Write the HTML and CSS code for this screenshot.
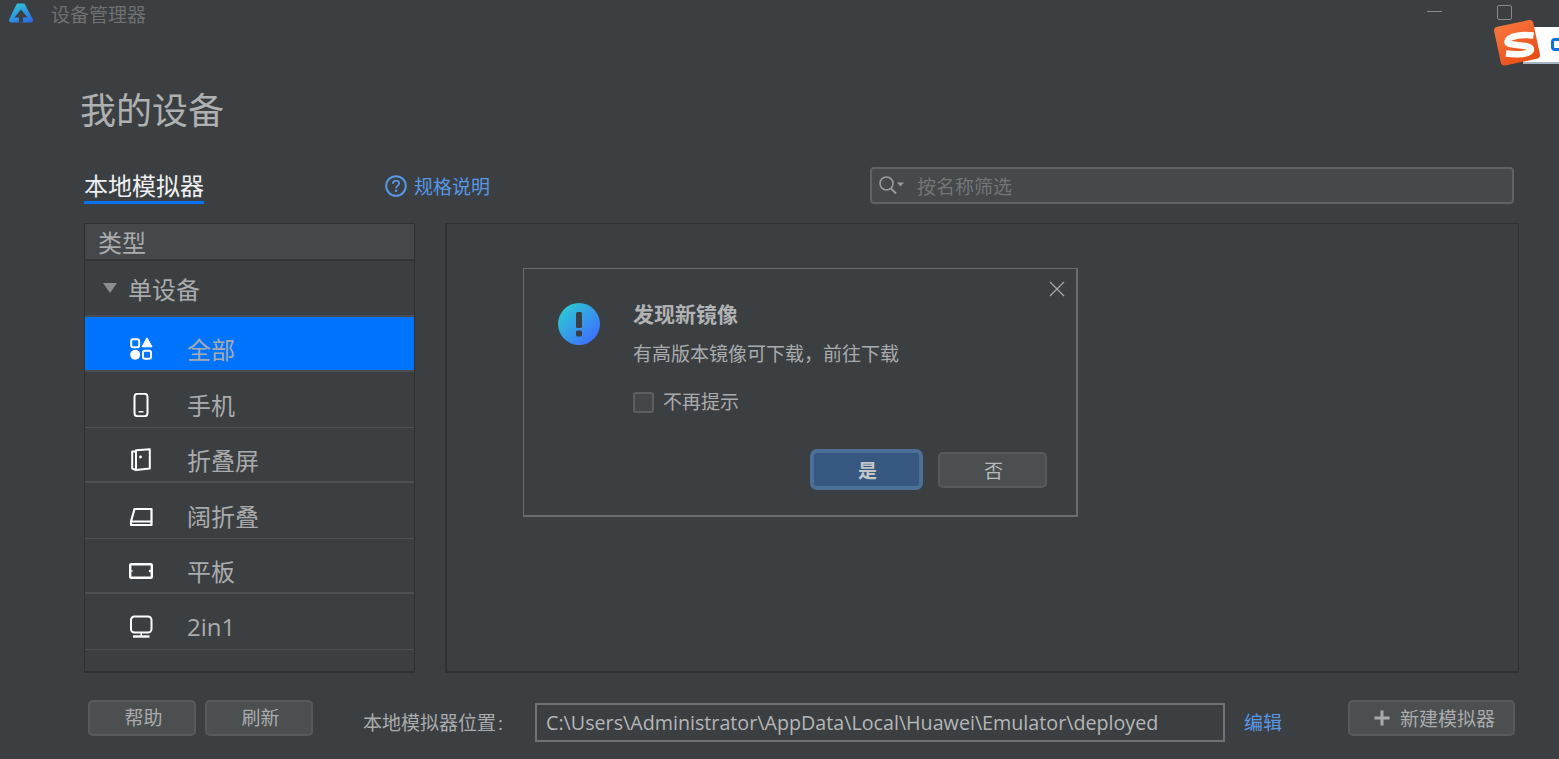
FILE: index.html
```html
<!DOCTYPE html>
<html lang="zh-CN">
<head>
<meta charset="utf-8">
<title>设备管理器</title>
<link rel="stylesheet" href="styles.css">
</head>
<body>
<div class="app">
  <header class="titlebar">
    <svg class="logo" viewBox="0 0 24 20" width="24" height="20">
      <defs>
        <linearGradient id="lg1" x1="0.200" y1="0" x2="0.800" y2="1"><stop offset="0" stop-color="#30c8d8"/><stop offset="1" stop-color="#2d6ce6"/></linearGradient>
      </defs>
      <path d="M8 0.500h7.500l8.200 15.500c.8 1.800-.2 3.500-2 3.500H2.300c-1.800 0-2.800-1.700-2-3.500z" fill="url(#lg1)"/>
      <path d="M12 6.500l6.500 8h-4.500v5h-4v-5H5.500z" fill="#3c3f41"/>
    </svg>
    <span class="app-name">设备管理器</span>
    <span class="win-min"></span>
    <span class="win-max"></span>
  </header>

  <h1 class="page-title">我的设备</h1>

  <div class="toolbar">
    <span class="tab">本地模拟器</span>
    <a class="spec">
      <svg viewBox="0 0 22 22" width="22" height="22">
        <circle cx="11" cy="11" r="9.800" fill="none" stroke="#5797e6" stroke-width="2"/>
        <path d="M7.900 8.700c0-1.900 1.400-3 3.100-3s3.100 1.100 3.100 2.800c0 2.400-3.100 2.400-3.100 4.800" fill="none" stroke="#5797e6" stroke-width="1.800"/>
        <circle cx="11" cy="15.800" r="1.200" fill="#5797e6"/>
      </svg>
      <span>规格说明</span>
    </a>
    <div class="search">
      <svg viewBox="0 0 28 20" width="28" height="20">
        <circle cx="8.500" cy="8.500" r="6.500" fill="none" stroke="#9a9c9e" stroke-width="1.600"/>
        <path d="M13 13.500l5 5" stroke="#9a9c9e" stroke-width="1.800" fill="none"/>
        <path d="M19 7.500h7l-3.500 4z" fill="#9a9c9e"/>
      </svg>
      <span class="placeholder">按名称筛选</span>
    </div>
  </div>

  <div class="content">
    <aside class="side">
      <div class="side-head">类型</div>
      <div class="group"><i class="caret"></i>单设备</div>
      <ul class="list">
        <li class="row active">
          <svg class="ico" viewBox="0 0 24 24" width="24" height="24">
            <rect x="2.200" y="2.200" width="8" height="8" rx="2" fill="none" stroke="#fff" stroke-width="2"/>
            <path d="M18 0.800l5 9h-10z" fill="#fff" stroke="#fff" stroke-linejoin="round"/>
            <circle cx="6.200" cy="17.800" r="5" fill="#fff"/>
            <rect x="14" y="13.800" width="8" height="8" rx="2" fill="none" stroke="#fff" stroke-width="2"/>
          </svg>
          <span>全部</span>
        </li>
        <li class="row">
          <svg class="ico" viewBox="0 0 24 24" width="24" height="24">
            <rect x="5.500" y="0.800" width="13" height="22.400" rx="3" fill="none" stroke="#fff" stroke-width="2"/>
            <path d="M9.500 18.800h5" stroke="#fff" stroke-width="1.400"/>
          </svg>
          <span>手机</span>
        </li>
        <li class="row thick">
          <svg class="ico" viewBox="0 0 24 24" width="24" height="24">
            <path d="M7 2.200l13.800-1v19.200L7 22z" fill="none" stroke="#fff" stroke-width="2" stroke-linejoin="round"/>
            <path d="M7 3.500H3.200v17L7 22" fill="none" stroke="#fff" stroke-width="2" stroke-linejoin="round"/>
            <circle cx="11.500" cy="9" r="1.400" fill="#fff"/>
          </svg>
          <span>折叠屏</span>
        </li>
        <li class="row">
          <svg class="ico" viewBox="0 0 24 24" width="24" height="24">
            <path d="M5.500 5h17v12.500H2z" fill="none" stroke="#fff" stroke-width="2.200" stroke-linejoin="round"/>
            <path d="M2 17.500V21h20.500v-3.500" fill="none" stroke="#fff" stroke-width="2.200" stroke-linejoin="round"/>
          </svg>
          <span>阔折叠</span>
        </li>
        <li class="row thick">
          <svg class="ico" viewBox="0 0 24 24" width="24" height="24">
            <rect x="1.200" y="5.200" width="21.600" height="13.600" rx="1" fill="none" stroke="#fff" stroke-width="2.400"/>
            <circle cx="3" cy="12" r="0.800" fill="#fff"/>
            <circle cx="21" cy="12" r="1.300" fill="#fff"/>
          </svg>
          <span>平板</span>
        </li>
        <li class="row">
          <svg class="ico" viewBox="0 0 24 24" width="24" height="24">
            <rect x="2" y="1.500" width="20.500" height="16" rx="3.500" fill="none" stroke="#fff" stroke-width="2"/>
            <path d="M12.200 18v3" stroke="#fff" stroke-width="1.500"/>
            <path d="M4 21.500h16.500" stroke="#fff" stroke-width="2.400"/>
          </svg>
          <span>2in1</span>
        </li>
      </ul>
    </aside>
    <section class="panel"></section>
  </div>

  <footer class="footer">
    <button class="btn btn-foot">帮助</button>
    <button class="btn btn-foot">刷新</button>
    <span class="loc-label">本地模拟器位置<span class="colon">:</span></span>
    <div class="loc-input">C:\Users\Administrator\AppData\Local\Huawei\Emulator\deployed</div>
    <a class="edit">编辑</a>
    <button class="btn btn-new">
      <svg viewBox="0 0 16 16" width="16" height="16"><path d="M8 0.500v15M0.500 8h15" stroke="#a9abad" stroke-width="3"/></svg>
      <span>新建模拟器</span>
    </button>
  </footer>
</div>

<div class="dialog">
  <svg class="close" viewBox="0 0 16 16" width="16" height="16"><path d="M1 1l14 14M15 1L1 15" stroke="#a4a6a8" stroke-width="1.300" fill="none"/></svg>
  <div class="dlg-top">
    <svg class="dlg-icon" viewBox="0 0 42 42" width="42" height="42">
      <defs><linearGradient id="dg" x1="0.100" y1="0.100" x2="0.900" y2="0.900"><stop offset="0" stop-color="#2bcbd3"/><stop offset="1" stop-color="#3f6cff"/></linearGradient></defs>
      <circle cx="21" cy="21" r="21" fill="url(#dg)"/>
      <rect x="18" y="9" width="6" height="16" rx="1.500" fill="#3c3f41"/>
      <rect x="18" y="27.500" width="6" height="6" rx="1.500" fill="#3c3f41"/>
    </svg>
    <div class="dlg-body">
      <div class="dlg-title">发现新镜像</div>
      <div class="dlg-text">有高版本镜像可下载，前往下载</div>
      <label class="dlg-check"><i class="box"></i><span>不再提示</span></label>
    </div>
  </div>
  <div class="dlg-actions">
    <button class="btn btn-yes">是</button>
    <button class="btn btn-no">否</button>
  </div>
</div>

<div class="ime">
  <div class="ime-bar"><span></span></div>
  <svg class="ime-s" viewBox="0 0 48 48" width="48" height="48">
    <defs><linearGradient id="sg" x1="0.300" y1="0" x2="0.700" y2="1"><stop offset="0" stop-color="#f6743c"/><stop offset="1" stop-color="#e84e17"/></linearGradient></defs>
    <rect x="4" y="4" width="40" height="39.500" rx="4" transform="rotate(-12 24 23.500)" fill="url(#sg)"/>
    <path d="M40.500 16.500C29 15 15 17 14.500 22.500 14 28 38 24.500 38 30.500 38 35.500 24 36 13 34.500" fill="none" stroke="#fff" stroke-width="6.500"/>
  </svg>
</div>
</body>
</html>
```
FILE: styles.css
```css
* { box-sizing: border-box; }
html, body { margin: 0; height: 100%; }
body {
  position: relative;
  width: 1559px;
  height: 759px;
  overflow: hidden;
  background: #3c3f41;
  color: #a9abad;
  font-family: "Open Sans", "Noto Sans CJK SC", sans-serif;
}
.app { display: flex; flex-direction: column; height: 759px; }

.titlebar { display: flex; align-items: flex-start; height: 30px; flex: none; padding: 3px 0 0 9px; }
.logo { flex: none; }
.app-name { margin: -2px 0 0 18px; font-size: 19px; line-height: 28px; color: #6f7072; }
.win-min { width: 15px; height: 1px; margin: 8px 0 0 auto; background: #8a8c8e; }
.win-max { width: 15px; height: 15px; margin: 2px 47px 0 55px; border: 1.500px solid #88898b; border-radius: 2px; }

.page-title { margin: 53px 0 0 80px; font-size: 36px; line-height: 56px; font-weight: 400; color: #aeb0b2; height: 56px; }

.toolbar { display: flex; align-items: center; height: 36px; margin-top: 28px; padding-left: 84px; }
.tab { width: 120px; height: 34px; margin-top: 3px; font-size: 24px; line-height: 32px; color: #eef0f2; border-bottom: 3px solid #0a72f0; }
.spec { display: flex; align-items: center; gap: 7px; margin: 2px 0 0 181px; font-size: 19px; color: #5797e6; }
.search { display: flex; align-items: center; gap: 11px; width: 644px; height: 37px; margin-left: 380px; padding-left: 6px; background: #45494a; border: 2px solid #606264; border-radius: 4px; }
.placeholder { padding-top: 1px; font-size: 19px; color: #737577; }

.content { display: flex; height: 450px; margin-top: 20px; padding-left: 84px; }
.side { width: 331px; border: 1px solid #2e3032; border-bottom-width: 2px; background: #3c3f41; }
.side-head { height: 37px; padding-left: 13px; font-size: 24px; line-height: 38px; background: #45484a; border-bottom: 2px solid #323436; }
.group { display: flex; align-items: center; height: 56px; padding-left: 18px; font-size: 24px; color: #a9abad; border-bottom: 2px solid #4a4d4f; }
.caret { width: 0; height: 0; margin-right: 11px; border: 7.500px solid transparent; border-top: 10px solid #8b8d8f; border-bottom: 0; }
.list { margin: 0; padding: 0; list-style: none; }
.row { display: flex; align-items: center; height: 55.500px; padding: 10px 0 0 44px; font-size: 24px; border-bottom: 1px solid #4d5052; }
.row.thick { border-bottom: 2px solid #4d5052; }
.row.active { background: #0073ff; border-bottom: 2px solid #4a4d4f; height: 55px; }
.ico { flex: none; margin: 1px 34px 0 0; }

.panel { width: 1074px; margin-left: 30px; border: 1px solid #2e3032; border-width: 1px 1px 2px 2px; }

.footer { display: flex; align-items: flex-start; margin-top: 27px; padding-left: 88px; }
.btn { font: inherit; color: inherit; background: #4b4f50; border: 2px solid #58595b; border-radius: 5px; padding: 0; cursor: default; }
.btn-foot { width: 108px; height: 36px; margin-right: 9px; padding-left: 3px; font-size: 19px; line-height: 30px; }
.loc-label { margin: 11px 0 0 41px; width: 172px; font-size: 19px; line-height: 24px; white-space: nowrap; }
.colon { margin-left: 2px; }
.loc-input { width: 690px; height: 39px; margin-top: 3px; padding-left: 9px; border: 2px solid #6f7173; font-size: 19.700px; line-height: 36px; color: #b4b6b8; white-space: nowrap; }
.edit { margin: 9px 0 0 19px; font-size: 19px; line-height: 28px; color: #5797e6; }
.btn-new { display: flex; align-items: center; justify-content: center; gap: 10px; width: 167px; height: 36px; margin-left: 66px; padding-left: 6px; font-size: 19px; }

.dialog { position: absolute; left: 523px; top: 268px; width: 555px; height: 249px; background: #3c3f41; border: 1px solid #6b6c6e; border-width: 1px 2px 2px 1px; }
.close { position: absolute; left: 525px; top: 12px; }
.dlg-top { display: flex; padding: 34px 0 0 34px; height: 180px; }
.dlg-icon { flex: none; }
.dlg-body { margin-left: 33px; }
.dlg-title { margin-top: -4px; font-size: 21px; line-height: 30px; font-weight: 700; color: #b0b2b4; }
.dlg-text { margin-top: 11px; font-size: 19px; line-height: 28px; }
.dlg-check { display: flex; align-items: center; gap: 9px; margin-top: 20px; font-size: 19px; line-height: 28px; }
.box { width: 21px; height: 21px; background: #43474a; border: 2px solid #5c5e60; border-radius: 3px; }
.dlg-actions { display: flex; align-items: center; padding-left: 286px; }
.btn-yes { width: 113px; height: 41px; padding-left: 2px; font-size: 19px; font-weight: 700; color: #c4c6c8; background: #365880; border: 4px solid #4a7098; border-radius: 7px; }
.btn-no { width: 109px; height: 36px; margin-left: 15px; padding-left: 2px; font-size: 19px; color: #b8babc; }

.ime { position: absolute; left: 1493px; top: 19px; width: 66px; height: 48px; }
.ime-s { position: absolute; left: 0; top: 0; }
.ime-bar { position: absolute; left: 30px; top: 8px; width: 36px; height: 37px; background: #fff; border-bottom: 2px solid #a8b4c8; }
.ime-bar span { position: absolute; left: 28px; top: 11px; width: 14px; height: 13px; border: 3.500px solid #0a6fe0; border-right-color: transparent; border-radius: 4px 0 0 4px; }
```
